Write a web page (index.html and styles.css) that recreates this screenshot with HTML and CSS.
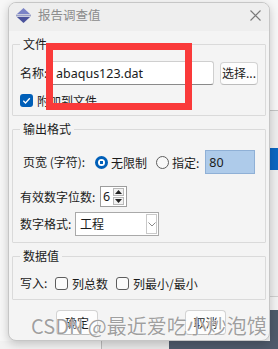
FILE: index.html
```html
<!DOCTYPE html>
<html lang="zh">
<head>
<meta charset="utf-8">
<title>报告调查值</title>
<link rel="stylesheet" href="styles.css">
</head>
<body>
<div class="window">
  <div class="titlebar">
    <svg class="app-icon" width="15" height="15" viewBox="0 0 16 16">
      <polygon points="8,0 15,6.5 1,6.5" fill="#7a83c6"/>
      <rect x="0" y="7" width="16" height="2" fill="#9aa0c8"/>
      <polygon points="1,9.5 15,9.5 8,16" fill="#4b539c"/>
    </svg>
    <span class="title">报告调查值</span>
    <svg class="close" width="11" height="11" viewBox="0 0 11 11">
      <path d="M0.5 0.5 L10.5 10.5 M10.5 0.5 L0.5 10.5" stroke="#7a7a7a" stroke-width="1.1" fill="none"/>
    </svg>
  </div>
  <div class="client">
    <fieldset class="group group-file">
      <legend>文件</legend>
      <div class="row name-row">
        <span class="lbl lbl-name">名称:</span>
        <div class="textbox name-box">abaqus123.dat</div>
        <button class="btn choose">选择...</button>
      </div>
      <div class="row check-row">
        <span class="checkbox checked">
          <svg width="13" height="13" viewBox="0 0 13 13"><path d="M3.3 6.8 L5.5 9 L9.8 4.3" stroke="#fff" stroke-width="1.3" fill="none"/></svg>
        </span>
        <span>附加到文件</span>
      </div>
    </fieldset>

    <fieldset class="group group-format">
      <legend>输出格式</legend>
      <div class="row width-row">
        <span class="lbl lbl-width">页宽 (字符):</span>
        <span class="radio checked"></span>
        <span class="opt-text">无限制</span>
        <span class="radio"></span>
        <span class="opt-text">指定:</span>
        <div class="textbox width-box">80</div>
      </div>
      <div class="row spin-row">
        <span class="lbl lbl-digits">有效数字位数:</span>
        <div class="spinbox">
          <span class="spin-val">6</span>
          <div class="spin-btns">
            <span class="spin-up"><svg width="7" height="4" viewBox="0 0 7 4"><polygon points="3.5,0 7,4 0,4" fill="#222"/></svg></span>
            <span class="spin-down"><svg width="7" height="4" viewBox="0 0 7 4"><polygon points="0,0 7,0 3.5,4" fill="#222"/></svg></span>
          </div>
        </div>
      </div>
      <div class="row combo-row">
        <span class="lbl lbl-numfmt">数字格式:</span>
        <div class="combo">
          <span class="combo-val">工程</span>
          <span class="combo-drop"><svg width="8" height="5" viewBox="0 0 8 5"><path d="M0.5 0.5 L4 4 L7.5 0.5" stroke="#8a8a8a" stroke-width="1" fill="none"/></svg></span>
        </div>
      </div>
    </fieldset>

    <fieldset class="group group-data">
      <legend>数据值</legend>
      <div class="row write-row">
        <span class="lbl lbl-write">写入:</span>
        <span class="checkbox"></span>
        <span class="opt-text">列总数</span>
        <span class="checkbox second"></span>
        <span class="opt-text">列最小/最小</span>
      </div>
    </fieldset>

    <div class="actions">
      <button class="btn ok">确定</button>
      <button class="btn cancel">取消</button>
    </div>
  </div>
  <div class="highlight"></div>
</div>
<div class="watermark">CSDN @最近爱吃小炒泡馍</div>
</body>
</html>
```
FILE: styles.css
```css
html, body {
  margin: 0;
}
body {
  position: relative;
  width: 278px;
  height: 349px;
  overflow: hidden;
  font-family: "Noto Sans CJK SC", "Noto Sans", sans-serif;
  font-size: 12px;
  color: #1b1b1b;
  background:
    linear-gradient(to bottom, #f7f7f7 0 110px, #c4c4c4 110px 111px, #eeeeee 111px 148px, #0a66c2 148px 170px, #efefef 170px 296px, #cfcfcf 296px 297px, #f3f3f3 297px 310px, #4f5a6b 310px) right top / 8px 100% no-repeat,
    linear-gradient(to right, #f2f2f2 0 101px, #b9b9b9 101px 102px, #e8e8e8 102px 169px, #4f5a6b 169px) left bottom / 100% 8px no-repeat,
    #f7f7f7;
}

.window {
  position: relative;
  box-sizing: border-box;
  margin: 2px 0 0 8px;
  width: 262px;
  height: 339px;
  border: 1px solid #c6c6c6;
  border-radius: 8px;
  overflow: hidden;
  background: #f4f4f4;
  box-shadow: 0 3px 10px rgba(0, 0, 0, 0.2);
}

.titlebar {
  box-sizing: border-box;
  height: 28px;
  padding: 0 0 4px 7px;
  display: flex;
  align-items: center;
  background: #eeeeee;
}
.app-icon { display: block; }
.title {
  margin-left: 7px;
  color: #8c8c8c;
  font-size: 12.5px;
  line-height: 16px;
}
.close {
  display: block;
  margin-left: auto;
  margin-right: 8px;
}

.client {
  padding: 5px 3px 0 3px;
}

.group {
  margin: 0;
  border: 1px solid #dadada;
  border-radius: 1px;
  min-width: 0;
}
.group legend {
  padding: 0 3px;
  line-height: 16px;
  font-size: 12px;
}
.group-file { padding: 9px 7px 6px 7px; }
.group-format { margin-top: 5px; padding: 13px 7px 6px 7px; }
.group-data { margin-top: 5px; padding: 10px 7px 7px 7px; }

.row {
  display: flex;
  align-items: center;
  white-space: nowrap;
}
.lbl { line-height: 16px; }

.textbox {
  box-sizing: border-box;
  background: #ffffff;
  border: 1px solid #cfcfcf;
  border-bottom-color: #8a8a8a;
  border-radius: 3px;
  display: flex;
  align-items: center;
}

.name-row { height: 24px; }
.lbl-name { flex: 1; }
.name-box {
  width: 164px;
  height: 24px;
  padding-left: 5px;
  font-family: "Noto Sans", sans-serif;
  font-size: 12.5px;
}
.btn {
  box-sizing: border-box;
  font-family: "Noto Sans CJK SC", "Noto Sans", sans-serif;
  font-size: 12px;
  color: #1b1b1b;
  background: #fdfdfd;
  border: 1px solid #d3d3d3;
  border-bottom-color: #bcbcbc;
  border-radius: 4px;
  padding: 0;
  line-height: 16px;
}
.choose {
  margin-left: 6px;
  width: 38px;
  height: 23px;
}

.check-row {
  margin-top: 6px;
  height: 18px;
  gap: 4px;
}
.checkbox {
  box-sizing: border-box;
  width: 13px;
  height: 13px;
  flex: none;
  border: 1px solid #5d5d5d;
  border-radius: 3px;
  background: #fbfbfb;
  display: block;
}
.checkbox.checked {
  border: none;
  background: #005fb8;
}
.checkbox svg { display: block; }

.width-row { height: 24px; }
.lbl-width { margin-left: 3px; width: 72px; }
.radio {
  box-sizing: border-box;
  width: 13px;
  height: 13px;
  flex: none;
  border-radius: 50%;
  border: 1px solid #5d5d5d;
  background: #f8f8f8;
}
.radio.checked {
  border: 3.5px solid #005fb8;
  background: #ffffff;
  box-shadow: inset 0 0 0 1.2px #ffffff;
  background: radial-gradient(circle, #005fb8 0 1.6px, #ffffff 2px);
}
.opt-text { margin-left: 3px; }
.width-row .radio + .opt-text + .radio { margin-left: 9px; }
.width-box {
  margin-left: 6px;
  width: 50px;
  height: 24px;
  padding-left: 3px;
  background: #aecbea;
  border: 1px solid #8fb0d6;
  border-radius: 0;
  font-family: "Noto Sans", sans-serif;
  font-size: 12.5px;
}

.spin-row { margin-top: 12px; height: 21px; }
.lbl-digits { width: 80px; }
.spinbox {
  box-sizing: border-box;
  width: 27px;
  height: 21px;
  border: 1px solid #9d9d9d;
  background: #ffffff;
  display: flex;
  align-items: center;
  padding: 1px 2px 1px 2px;
}
.spin-val {
  flex: 1;
  font-family: "Noto Sans", sans-serif;
  font-size: 12.5px;
  line-height: 16px;
}
.spin-btns {
  display: flex;
  flex-direction: column;
  gap: 1px;
  height: 100%;
}
.spin-btns span {
  box-sizing: border-box;
  width: 11px;
  flex: 1;
  display: flex;
  align-items: center;
  justify-content: center;
  border: 1px solid #b8b8b8;
  background: #f2f2f2;
}
.spin-btns svg { display: block; }

.combo-row { margin-top: 5px; height: 24px; }
.lbl-numfmt { width: 55px; }
.combo {
  box-sizing: border-box;
  width: 84px;
  height: 24px;
  border: 1px solid #a9a9a9;
  background: #ffffff;
  display: flex;
  align-items: center;
  padding: 1px 1px 1px 4px;
}
.combo-val { flex: 1; line-height: 16px; }
.combo-drop {
  box-sizing: border-box;
  width: 11px;
  height: 100%;
  border: 1px solid #c9c9c9;
  display: flex;
  align-items: center;
  justify-content: center;
}
.combo-drop svg { display: block; }

.write-row { height: 18px; }
.lbl-write { width: 35px; }
.write-row .opt-text { margin-left: 4px; }
.checkbox.second { margin-left: 8px; }

.actions {
  margin-top: 10px;
  padding-left: 44px;
  display: flex;
  gap: 87px;
}
.ok { width: 42px; height: 25px; }
.cancel { width: 41px; height: 25px; }

.highlight {
  position: absolute;
  left: 37px;
  top: 40px;
  box-sizing: border-box;
  width: 146px;
  height: 67px;
  border: 7px solid #fa3a3a;
}

.watermark {
  position: absolute;
  left: 31px;
  top: 313px;
  white-space: nowrap;
  font-family: "Noto Sans CJK SC", "Noto Sans", sans-serif;
  font-size: 20px;
  line-height: 26px;
  color: rgba(128, 128, 128, 0.75);
  text-shadow: 0 0 1px #ffffff, 0 0 1px #ffffff;
}
```
